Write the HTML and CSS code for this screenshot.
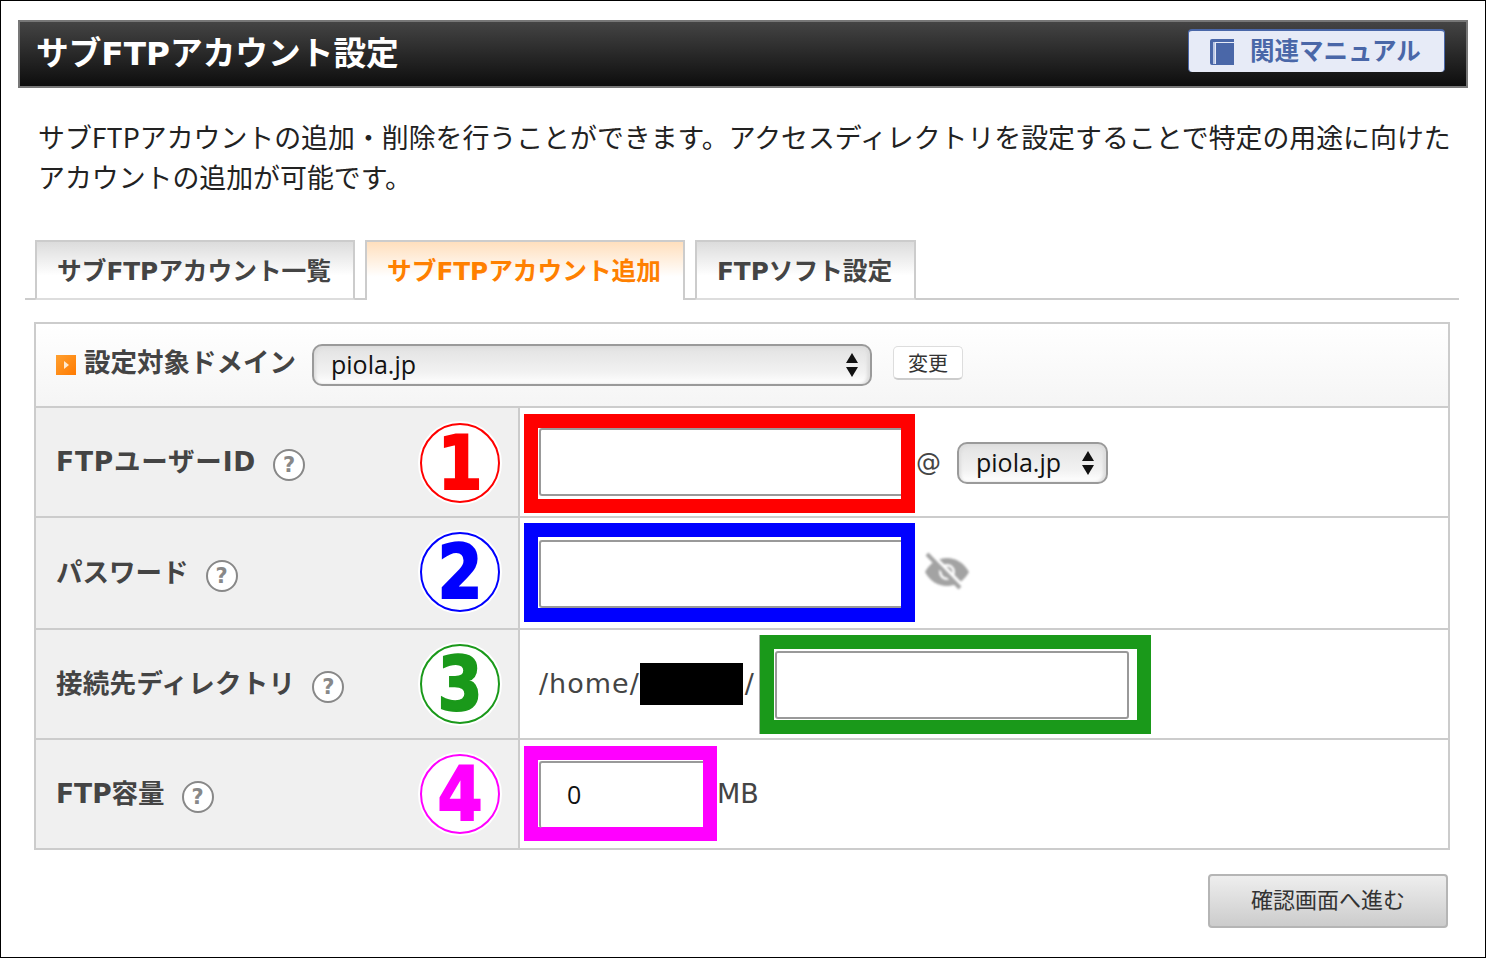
FILE: index.html
```html
<!DOCTYPE html>
<html lang="ja">
<head>
    <meta charset="UTF-8">
    <title>サブFTPアカウント設定</title>
    <link rel="stylesheet" href="styles.css">
</head>
<body>
    <div class="page">
        <header class="head">
            <h1>サブFTPアカウント設定</h1>
            <a class="manual">
                <svg width="26" height="28" viewBox="0 0 26 28"><path fill="#4a67a8" d="M1 3a2 2 0 0 1 2-2h22v3H6v22h19v1H3a2 2 0 0 1-2-2z"/><rect x="7" y="5" width="18" height="21" fill="#4a67a8"/><rect x="4" y="4" width="2" height="22" fill="#b9c6e3"/></svg>
                <span>関連マニュアル</span>
            </a>
        </header>
        <p class="lead">サブFTPアカウントの追加・削除を行うことができます。アクセスディレクトリを設定することで特定の用途に向けたアカウントの追加が可能です。</p>

        <nav class="tabs">
            <a class="tab">サブFTPアカウント一覧</a>
            <a class="tab active">サブFTPアカウント追加</a>
            <a class="tab">FTPソフト設定</a>
        </nav>

        <section class="panel">
            <div class="domain">
                <span class="bullet"></span>
                <b>設定対象ドメイン</b>
                <div class="select wide">piola.jp<i class="updown"></i></div>
                <button class="change">変更</button>
            </div>

            <div class="row row1">
                <div class="name">
                    <b>FTPユーザーID</b><span class="help">?</span>
                    <span class="num red"><span class="digit">1</span></span>
                </div>
                <div class="cell">
                    <div class="mark m-red"><div class="field"></div></div>
                    <span class="at">@</span>
                    <div class="select small">piola.jp<i class="updown"></i></div>
                </div>
            </div>

            <div class="row row2">
                <div class="name">
                    <b>パスワード</b><span class="help">?</span>
                    <span class="num blue"><span class="digit">2</span></span>
                </div>
                <div class="cell">
                    <div class="mark m-blue"><div class="field"></div></div>
                    <svg class="eye" width="46" height="40" viewBox="0 0 46 40"><path fill="#a3a3a3" fill-rule="evenodd" d="M1 20C6 11 14 6 23 6s17 5 22 14c-5 9-13 14-22 14S6 29 1 20zm22-8a8 8 0 1 0 0 16 8 8 0 0 0 0-16z"/><circle cx="23" cy="20" r="5.5" fill="#a3a3a3"/><path stroke="#fff" stroke-width="6" d="M5 1l33 34"/><path stroke="#a3a3a3" stroke-width="4" d="M3 2l33 34"/></svg>
                </div>
            </div>

            <div class="row row3">
                <div class="name">
                    <b>接続先ディレクトリ</b><span class="help">?</span>
                    <span class="num green"><span class="digit">3</span></span>
                </div>
                <div class="cell home">
                    <span class="path">/home/</span><span class="redact"></span><span class="path slash">/</span>
                    <div class="mark m-green"><div class="field full"></div></div>
                </div>
            </div>

            <div class="row row4">
                <div class="name">
                    <b>FTP容量</b><span class="help">?</span>
                    <span class="num pink"><span class="digit">4</span></span>
                </div>
                <div class="cell">
                    <div class="mark m-pink"><div class="field">0</div></div>
                    <span class="path">MB</span>
                </div>
            </div>
        </section>

        <div class="foot">
            <button class="next">確認画面へ進む</button>
        </div>
    </div>
</body>
</html>
```

FILE: styles.css
```css
* {
    margin: 0;
    padding: 0;
    box-sizing: border-box;
}
html, body {
    height: 100%;
    overflow: hidden;
}
body {
    background: #fff;
    color: #333;
    font-family: "Noto Sans CJK JP", "Liberation Sans", sans-serif;
}
.page {
    width: 1486px;
    height: 958px;
    border: 1px solid #000;
    padding: 19px 17px 0 17px;
}
.head {
    height: 68px;
    border: 2px solid #777;
    background: linear-gradient(#444, #0d0d0d);
    display: flex;
    align-items: center;
    justify-content: space-between;
    padding: 0 21px 0 16px;
}
.head h1 {
    color: #fff;
    font-family: "DejaVu Sans", "Noto Sans CJK JP", sans-serif;
    font-size: 32.7px;
    font-weight: 700;
    line-height: 1;
}
.manual {
    width: 257px;
    height: 43px;
    margin-top: -7px;
    background: #e7ebf7;
    border: 2px solid #4a67a8;
    border-width: 2px 1px 0 1px;
    border-radius: 4px;
    color: #4a67a8;
    font-size: 24.5px;
    font-weight: 700;
    display: flex;
    align-items: center;
    padding: 0 0 4px 20px;
    gap: 15px;
}
.manual svg {
    margin-top: 4px;
}
.lead {
    margin: 29px 0 0 20px;
    width: 1420px;
    font-size: 26.9px;
    line-height: 40px;
    color: #222;
}
.tabs {
    margin: 43px 9px 0 7px;
    height: 60px;
    padding-left: 10px;
    display: flex;
    gap: 10px;
    border-bottom: 2px solid #ccc;
}
.tab {
    height: 60px;
    border: 2px solid #ccc;
    padding: 0 22px 0 20px;
    font-family: "DejaVu Sans", "Noto Sans CJK JP", sans-serif;
    font-size: 24.7px;
    font-weight: 700;
    line-height: 60px;
    color: #444;
    background: linear-gradient(#dcdcdc, #fff 60%);
    border-bottom: 2px solid #ddd;
    white-space: nowrap;
}
.tab.active {
    color: #ff8000;
    background: linear-gradient(#ffdfbd, #fff 60%);
    border-bottom: 0;
    position: relative;
    z-index: 1;
}
.panel {
    margin: 22px 18px 0 16px;
    border: 2px solid #ccc;
    border-bottom: 0;
}
.domain {
    height: 84px;
    border-bottom: 2px solid #ccc;
    background: linear-gradient(#fff, #f5f5f5);
    display: flex;
    align-items: center;
    padding-left: 20px;
    color: #444;
    font-size: 26.5px;
}
.bullet {
    width: 20px;
    height: 20px;
    background: linear-gradient(135deg, #ffa030, #ff7a00);
    position: relative;
    margin-right: 8px;
}
.bullet::after {
    content: "";
    position: absolute;
    left: 8px;
    top: 6px;
    border-left: 5px solid #ffe9cf;
    border-top: 4px solid transparent;
    border-bottom: 4px solid transparent;
}
.domain b {
    font-weight: 700;
    margin-right: 16px;
    margin-bottom: 10px;
}
.select {
    position: relative;
    height: 42px;
    border: 2px solid #9a9a9a;
    border-radius: 10px;
    background: linear-gradient(#e2e2e2, #f2f2f2 70%, #fff);
    box-shadow: inset 2px 2px 3px #ddd, inset -3px 0 3px #ddd;
    font-family: "Open Sans", "Liberation Sans", sans-serif;
    color: #111;
    font-size: 25px;
    line-height: 36px;
    padding-left: 17px;
}
.select.wide {
    width: 560px;
}
.select.small {
    width: 151px;
    margin-top: 2px;
}
.updown {
    position: absolute;
    right: 12px;
    top: 7px;
    width: 12px;
    height: 24px;
}
.updown::before, .updown::after {
    content: "";
    position: absolute;
    left: 0;
    border-left: 6px solid transparent;
    border-right: 6px solid transparent;
}
.updown::before {
    top: 0;
    border-bottom: 10px solid #111;
}
.updown::after {
    bottom: 0;
    border-top: 10px solid #111;
}
.change {
    margin-left: 21px;
    width: 70px;
    height: 34px;
    border: 1px solid #ddd;
    border-bottom: 2px solid #ccc;
    border-radius: 5px;
    background: #fff;
    color: #333;
    font: 20px "Noto Sans CJK JP", sans-serif;
    margin-bottom: 4px;
}
.row {
    display: flex;
    border-bottom: 2px solid #ccc;
}
.row1 {
    height: 110px;
}
.row2 {
    height: 112px;
}
.row3 {
    height: 110px;
}
.row4 {
    height: 110px;
}
.name {
    position: relative;
    width: 484px;
    background: #f0f0f0;
    border-right: 2px solid #ccc;
    display: flex;
    align-items: center;
    padding-left: 20px;
    color: #444;
    font-size: 26.5px;
}
.name b {
    font-family: "DejaVu Sans", "Noto Sans CJK JP", sans-serif;
    font-weight: 700;
    margin-bottom: 6px;
    white-space: nowrap;
}
.row1 .name b {
    letter-spacing: 0.8px;
}
.row3 .name b {
    letter-spacing: 0.3px;
}
.help {
    width: 32px;
    height: 32px;
    margin: 6px 0 0 17px;
    border-radius: 50%;
    border: 2px solid #888;
    background: #fff;
    color: #888;
    font: 700 21px/28px "DejaVu Sans", sans-serif;
    text-align: center;
}
.num {
    position: absolute;
    left: 384px;
    top: 15px;
    width: 80px;
    height: 80px;
    border-radius: 50%;
    border: 2px solid;
    background: #fff;
    font: 700 72px/76px "DejaVu Sans", sans-serif;
    -webkit-text-stroke: 2px;
    text-align: center;
    box-shadow: 0 0 0 2px #fff;
}
.digit {
    display: inline-block;
    transform: scale(0.9, 1.05);
}
.row2 .num, .row3 .num, .row4 .num {
    top: 14px;
}
.num.red { color: #f00; }
.num.blue { color: #00f; }
.num.green { color: #1a991a; }
.num.pink { color: #f0f; }
.cell {
    flex: 1;
    display: flex;
    align-items: center;
    padding-left: 4px;
}
.mark {
    width: 391px;
    height: 99px;
    border: 14px solid;
    background: #fff;
}
.m-red {
    border-color: #f00;
    margin-top: 2px;
}
.m-blue {
    border-color: #00f;
    margin-top: -2px;
}
.m-green {
    border-color: #1a991a;
    box-shadow: -1px 0 #aaa;
}
.m-pink {
    border-color: #f0f;
    width: 193px;
    height: 95px;
    margin-top: -2px;
}
.field {
    height: calc(100% - 3px);
    border: 2px solid #999;
    border-right: 0;
    border-radius: 3px 0 0 3px;
    margin: 0 0 0 1px;
    font: 25px/62px "Open Sans", "Liberation Sans", sans-serif;
    color: #111;
    padding-left: 26px;
}
.m-blue .field {
    margin-top: 3px;
}
.m-green .field {
    margin-top: 2px;
}
.m-pink .field {
    height: 100%;
    margin-top: 1px;
    border-bottom: 0;
}
.field.full {
    margin-right: 8px;
    border-right: 2px solid #999;
    border-radius: 3px;
}
.at {
    font: 25px "DejaVu Sans", sans-serif;
    color: #444;
    margin: 0 16px 0 1px;
}
.eye {
    margin: 0 0 2px 9px;
    filter: blur(0.8px);
}
.home {
    padding-left: 19px;
}
.path {
    font: 27px "DejaVu Sans", sans-serif;
    color: #444;
    position: relative;
    top: -1px;
}
.home .path {
    letter-spacing: 1px;
}
.home .slash {
    margin: 0 5px 0 2px;
}
.redact {
    width: 103px;
    height: 42px;
    background: #000;
}
.foot {
    margin: 24px 20px 0 0;
    display: flex;
    justify-content: flex-end;
}
.next {
    width: 240px;
    height: 54px;
    border: 2px solid #b5b5b5;
    border-radius: 4px;
    background: linear-gradient(#eee, #ccc);
    color: #333;
    font: 22px "Noto Sans CJK JP", sans-serif;
    padding-bottom: 6px;
}
```
